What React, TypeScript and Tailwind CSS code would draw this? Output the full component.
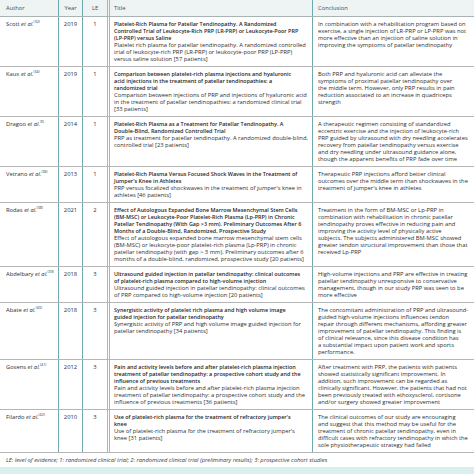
type Row = {
  author: string;
  refNo: string;
  year: string;
  le: string;
  title: string[];
  trans: string[];
  concl: string[];
};

const rows: Row[] = [
  {
    author: 'Scott',
    refNo: '(32)',
    year: '2019',
    le: '1',
    title: [
      'Platelet-Rich Plasma for Patellar Tendinopathy. A Randomized',
      'Controlled Trial of Leukocyte-Rich PRP (LR-PRP) or Leukocyte-Poor PRP',
      '(LP-PRP) versus Saline',
    ],
    trans: [
      'Platelet rich plasma for patellar tendinopathy. A randomized controlled',
      'trial of leukocyte-rich PRP (LR-PRP) or leukocyte-poor PRP (LP-PRP)',
      'versus saline solution [57 patients]',
    ],
    concl: [
      'In combination with a rehabilitation program based on',
      'exercise, a single injection of LR-PRP or LP-PRP was not',
      'more effective than an injection of saline solution in',
      'improving the symptoms of patellar tendinopathy',
    ],
  },
  {
    author: 'Kaux',
    refNo: '(34)',
    year: '2019',
    le: '1',
    title: [
      'Comparison between platelet-rich plasma injections and hyaluronic',
      'acid injections in the treatment of patellar tendinopathies: a',
      'randomized trial',
    ],
    trans: [
      'Comparison between injections of PRP and injections of hyaluronic acid',
      'in the treatment of patellar tendinopathies: a randomized clinical trial',
      '[33 patients]',
    ],
    concl: [
      'Both PRP and hyaluronic acid can alleviate the',
      'symptoms of proximal patellar tendinopathy over',
      'the middle term. However, only PRP results in pain',
      'reduction associated to an increase in quadriceps',
      'strength',
    ],
  },
  {
    author: 'Dragoo',
    refNo: '35',
    year: '2014',
    le: '1',
    title: [
      'Platelet-Rich Plasma as a Treatment for Patellar Tendinopathy. A',
      'Double-Blind, Randomized Controlled Trial',
    ],
    trans: [
      'PRP as treatment for patellar tendinopathy. A randomized double-blind,',
      'controlled trial [23 patients]',
    ],
    concl: [
      'A therapeutic regimen consisting of standardized',
      'eccentric exercise and the injection of leukocyte-rich',
      'PRP guided by ultrasound with dry needling accelerates',
      'recovery from patellar tendinopathy versus exercise',
      'and dry needling under ultrasound guidance alone,',
      'though the apparent benefits of PRP fade over time',
    ],
  },
  {
    author: 'Vetrano',
    refNo: '(36)',
    year: '2013',
    le: '1',
    title: [
      'Platelet-Rich Plasma Versus Focused Shock Waves in the Treatment of',
      "Jumper's Knee in Athletes",
    ],
    trans: [
      "PRP versus focalized shockwaves in the treatment of jumper's knee in",
      'athletes [46 patients]',
    ],
    concl: [
      'Therapeutic PRP injections afford better clinical',
      'outcomes over the middle term than shockwaves in the',
      "treatment of jumper's knee in athletes",
    ],
  },
  {
    author: 'Rodas',
    refNo: '(38)',
    year: '2021',
    le: '2',
    title: [
      'Effect of Autologous Expanded Bone Marrow Mesenchymal Stem Cells',
      '(BM-MSC) or Leukocyte-Poor Platelet-Rich Plasma (Lp-PRP) in Chronic',
      'Patellar Tendinopathy (With Gap >3 mm). Preliminary Outcomes After 6',
      'Months of a Double-Blind, Randomized, Prospective Study',
    ],
    trans: [
      'Effect of autologous expanded bone marrow mesenchymal stem cells',
      '(BM-MSC) or leukocyte-poor platelet-rich plasma (Lp-PRP) in chronic',
      'patellar tendinopathy (with gap > 3 mm). Preliminary outcomes after 6',
      'months of a double-blind, randomized, prospective study [20 patients]',
    ],
    concl: [
      'Treatment in the form of BM-MSC or Lp-PRP in',
      'combination with rehabilitation in chronic patellar',
      'tendinopathy proves effective in reducing pain and',
      'improving the activity level of physically active',
      'subjects. The subjects administered BM-MSC showed',
      'greater tendon structural improvement than those that',
      'received Lp-PRP',
    ],
  },
  {
    author: 'Abdelbary',
    refNo: '(39)',
    year: '2018',
    le: '3',
    title: [
      'Ultrasound guided injection in patellar tendinopathy: clinical outcomes',
      'of platelet-rich plasma compared to high-volume injection',
    ],
    trans: [
      'Ultrasound guided injection in patellar tendinopathy: clinical outcomes',
      'of PRP compared to high-volume injection [20 patients]',
    ],
    concl: [
      'High-volume injections and PRP are effective in treating',
      'patellar tendinopathy unresponsive to conservative',
      'management, though in our study PRP was seen to be',
      'more effective',
    ],
  },
  {
    author: 'Abate',
    refNo: '(40)',
    year: '2018',
    le: '3',
    title: [
      'Synergistic activity of platelet rich plasma and high volume image',
      'guided injection for patellar tendinopathy',
    ],
    trans: [
      'Synergistic activity of PRP and high volume image guided injection for',
      'patellar tendinopathy [34 patients]',
    ],
    concl: [
      'The concomitant administration of PRP and ultrasound-',
      'guided high-volume injections influences tendon',
      'repair through different mechanisms, affording greater',
      'improvement of patellar tendinopathy. This finding is',
      'of clinical relevance, since this disease condition has',
      'a substantial impact upon patient work and sports',
      'performance.',
    ],
  },
  {
    author: 'Gosens',
    refNo: '(41)',
    year: '2012',
    le: '3',
    title: [
      'Pain and activity levels before and after platelet-rich plasma injection',
      'treatment of patellar tendinopathy: a prospective cohort study and the',
      'influence of previous treatments',
    ],
    trans: [
      'Pain and activity levels before and after platelet-rich plasma injection',
      'treatment of patellar tendinopathy: a prospective cohort study and the',
      'influence of previous treatments [36 patients]',
    ],
    concl: [
      'After treatment with PRP, the patients with patients',
      'showed statistically significant improvement. In',
      'addition, such improvement can be regarded as',
      'clinically significant. However, the patients that had not',
      'been previously treated with ethoxysclerol, cortisone',
      'and/or surgery showed greater improvement',
    ],
  },
  {
    author: 'Filardo',
    refNo: '(42)',
    year: '2010',
    le: '3',
    title: ["Use of platelet-rich plasma for the treatment of refractory jumper's", 'knee'],
    trans: ["Use of platelet-rich plasma for the treatment of refractory jumper's", 'knee [31 patients]'],
    concl: [
      'The clinical outcomes of our study are encouraging',
      'and suggest that this method may be useful for the',
      'treatment of chronic patellar tendinopathy, even in',
      'difficult cases with refractory tendinopathy in which the',
      'sole physiotherapeutic strategy had failed',
    ],
  },
];

function Lines({ lines }: { lines: string[] }) {
  return (
    <>
      {lines.map((l, i) => (
        <div key={i} className="whitespace-nowrap">
          {l}
        </div>
      ))}
    </>
  );
}

const grid = 'grid grid-cols-[59px_24px_27px_203px_1fr]';

export default function App() {
  return (
    <div className="w-[474px] h-[474px] overflow-hidden bg-white font-['Open_Sans',sans-serif] text-[5.8px] leading-[7px] text-[#2e2e2e]">
      {/* Header */}
      <div className={`${grid} h-[17px] bg-[#eef3f3] border-b border-[#a9b3b3] font-medium text-[#4a4a4a]`}>
        <div className="pl-[6px] flex items-center border-r border-[#6fa9ad]">Author</div>
        <div className="flex items-center justify-center border-r border-[#6fa9ad]">Year</div>
        <div className="flex items-center justify-center border-r-[3px] border-double border-[#8cc3c6]">LE</div>
        <div className="pl-[4px] flex items-center border-r border-[#6fa9ad]">Title</div>
        <div className="pl-[5px] flex items-center">Conclusion</div>
      </div>

      {/* Rows */}
      {rows.map((r) => (
        <div key={r.author} className={`${grid} border-b border-[#b5b5b5]`}>
          <div className="pl-[6px] py-[3.5px] border-r border-[#6fa9ad] whitespace-nowrap">
            {r.author} <span className="italic">et al.</span>
            <sup className="text-[3.6px] align-top leading-[5px]">{r.refNo}</sup>
          </div>
          <div className="py-[3.5px] text-center border-r border-[#6fa9ad]">{r.year}</div>
          <div className="py-[3.5px] text-center border-r-[3px] border-double border-[#8cc3c6]">{r.le}</div>
          <div className="pl-[4px] py-[3.5px] border-r border-[#6fa9ad]">
            <div className="font-semibold text-[5.45px] text-[#262626]">
              <Lines lines={r.title} />
            </div>
            <Lines lines={r.trans} />
          </div>
          <div className="pl-[5px] py-[3.5px]">
            <Lines lines={r.concl} />
          </div>
        </div>
      ))}

      {/* Footnote */}
      <div className="pl-[6px] pt-[4px] pb-[3px] italic text-[#3a3a3a] whitespace-nowrap">
        LE: level of evidence; 1: randomized clinical trial; 2: randomized clinical trial (preliminary results); 3: prospective cohort studies
      </div>
      <div className="h-[10px] bg-[#dcefef]" />
    </div>
  );
}
